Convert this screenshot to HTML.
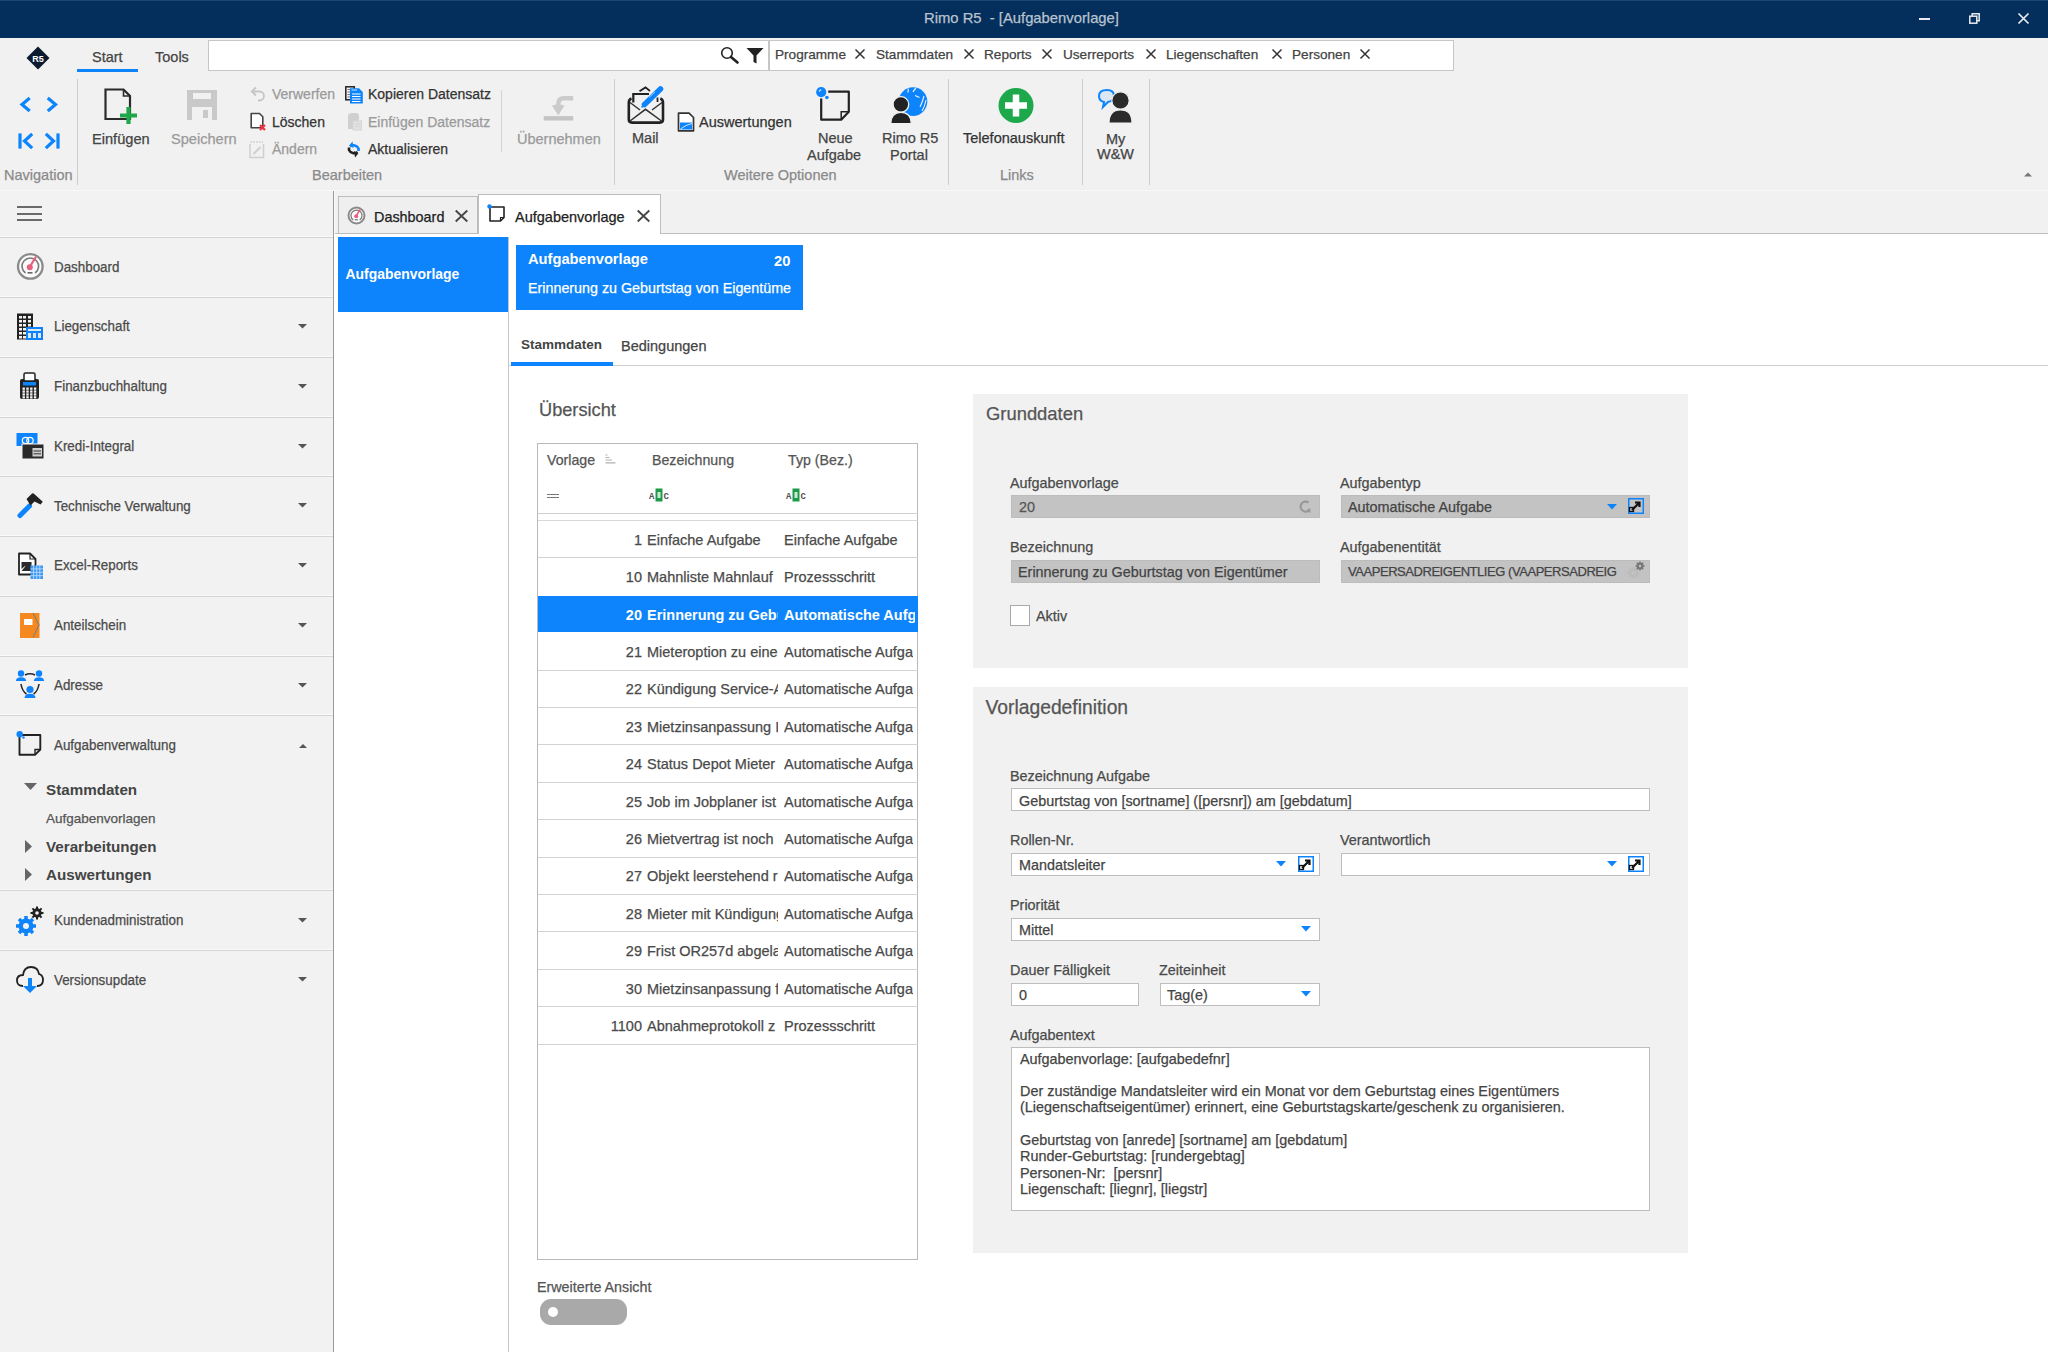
<!DOCTYPE html>
<html><head><meta charset="utf-8">
<style>
*{margin:0;padding:0;box-sizing:border-box}
html,body{width:2048px;height:1352px;overflow:hidden;background:#fff;font-family:"Liberation Sans",sans-serif;color:#444}
.a{position:absolute}
.t{position:absolute;white-space:nowrap;line-height:20px;height:20px;-webkit-text-stroke:0.25px currentColor}
.hl{position:absolute;height:1px;background:#d4d4d4}
.vl{position:absolute;width:1px;background:#c8c8c8}
svg{position:absolute;overflow:visible}
</style></head><body>
<!-- TITLE BAR -->
<div class="a" style="left:0;top:0;width:2048px;height:38px;background:#042e5b"></div><div class="a" style="left:0;top:0;width:2048px;height:1px;background:#1a4674"></div>
<div class="t" style="left:924px;top:8px;font-size:14.8px;color:#b9c3cf">Rimo R5&nbsp; - [Aufgabenvorlage]</div>
<div class="a" style="left:1919px;top:18px;width:11px;height:2px;background:#e8ecf2"></div>
<svg style="left:1969px;top:13px" width="11" height="11"><rect x="0.8" y="3.2" width="7" height="7" fill="none" stroke="#e8ecf2" stroke-width="1.5"/><path d="M3.2 3V0.8H10.2V7.8H8" fill="none" stroke="#e8ecf2" stroke-width="1.5"/></svg>
<svg style="left:2018px;top:13px" width="11" height="11"><path d="M0.5 0.5L10.5 10.5M10.5 0.5L0.5 10.5" stroke="#e8ecf2" stroke-width="1.7"/></svg>

<!-- RIBBON -->
<div class="a" style="left:0;top:38px;width:2048px;height:153px;background:#f1f1f1"></div>

<!-- logo -->
<svg style="left:26px;top:46px" width="24" height="24"><path d="M12 0.5L23.5 12L12 23.5L0.5 12Z" fill="#0b1a2e"/><text x="12" y="15.6" font-family="Liberation Sans" font-size="9" font-weight="bold" fill="#fff" text-anchor="middle">R5</text></svg>
<div class="t" style="left:92px;top:47px;font-size:14.5px;color:#444">Start</div>
<div class="a" style="left:77px;top:69px;width:61px;height:3px;background:#0d84fb"></div>
<div class="t" style="left:155px;top:47px;font-size:14.5px;color:#444">Tools</div>
<!-- search box -->
<div class="a" style="left:208px;top:40px;width:1246px;height:31px;background:#fff;border:1px solid #c6c6c6"></div>
<svg style="left:720px;top:46px" width="20" height="18"><circle cx="7" cy="7" r="5.3" fill="none" stroke="#222" stroke-width="1.6"/><path d="M11 11L17.5 16.5" stroke="#222" stroke-width="2.6" stroke-linecap="round"/></svg>
<svg style="left:746px;top:47px" width="18" height="17"><path d="M0.5 1H17.5L10.5 8.5V16.5L7.5 15V8.5Z" fill="#222"/></svg>
<div class="a" style="left:768px;top:41px;width:2px;height:29px;background:#c6c6c6"></div>
<div class="t" style="left:775px;top:45px;font-size:13.6px;color:#444">Programme</div>
<div class="t" style="left:876px;top:45px;font-size:13.6px;color:#444">Stammdaten</div>
<div class="t" style="left:984px;top:45px;font-size:13.6px;color:#444">Reports</div>
<div class="t" style="left:1063px;top:45px;font-size:13.6px;color:#444">Userreports</div>
<div class="t" style="left:1166px;top:45px;font-size:13.6px;color:#444">Liegenschaften</div>
<div class="t" style="left:1292px;top:45px;font-size:13.6px;color:#444">Personen</div>
<svg style="left:855px;top:49px" width="10" height="10"><path d="M0.5 0.5L9.5 9.5M9.5 0.5L0.5 9.5" stroke="#333" stroke-width="1.5"/></svg>
<svg style="left:964px;top:49px" width="10" height="10"><path d="M0.5 0.5L9.5 9.5M9.5 0.5L0.5 9.5" stroke="#333" stroke-width="1.5"/></svg>
<svg style="left:1042px;top:49px" width="10" height="10"><path d="M0.5 0.5L9.5 9.5M9.5 0.5L0.5 9.5" stroke="#333" stroke-width="1.5"/></svg>
<svg style="left:1146px;top:49px" width="10" height="10"><path d="M0.5 0.5L9.5 9.5M9.5 0.5L0.5 9.5" stroke="#333" stroke-width="1.5"/></svg>
<svg style="left:1272px;top:49px" width="10" height="10"><path d="M0.5 0.5L9.5 9.5M9.5 0.5L0.5 9.5" stroke="#333" stroke-width="1.5"/></svg>
<svg style="left:1360px;top:49px" width="10" height="10"><path d="M0.5 0.5L9.5 9.5M9.5 0.5L0.5 9.5" stroke="#333" stroke-width="1.5"/></svg>

<!-- ribbon body -->
<!-- navigation -->
<svg style="left:18px;top:96px" width="44" height="54" fill="none" stroke="#0d84fb" stroke-width="3.2" stroke-linecap="square">
<path d="M10.5 3L4 8.5L10.5 14"/><path d="M31 3L37.5 8.5L31 14"/>
<path d="M2 39V51" stroke-width="3.2"/><path d="M13 39L6.5 45L13 51"/>
<path d="M29 39L35.5 45L29 51"/><path d="M40 39V51" stroke-width="3.2"/>
</svg>
<div class="t" style="left:4px;top:164.5px;font-size:14.5px;color:#8a8a8a">Navigation</div>
<div class="vl" style="left:77px;top:79px;height:106px;background:#cdcdcd"></div>
<!-- Einfuegen -->
<svg style="left:104px;top:88px" width="34" height="38"><path d="M1.5 1.5H19.5L26 8V31H1.5Z" fill="none" stroke="#2b2b2b" stroke-width="2.2"/><path d="M19.5 1.5V8H26" fill="none" stroke="#2b2b2b" stroke-width="1.6"/><path d="M24.5 19V36M16 27.5H33" stroke="#1da84a" stroke-width="4.2"/></svg>
<div class="t" style="left:92px;top:129px;font-size:14.6px;color:#444">Einfügen</div>
<!-- Speichern -->
<svg style="left:187px;top:90px" width="31" height="31"><path d="M0 0H30V30H0Z" fill="#c9c9c9"/><rect x="6" y="3" width="18" height="6" fill="#f1f1f1"/><rect x="5" y="17" width="20" height="13" fill="#f1f1f1"/><rect x="16" y="20" width="5" height="8" fill="#c9c9c9"/></svg>
<div class="t" style="left:171px;top:129px;font-size:14.6px;color:#9a9a9a">Speichern</div>
<!-- small buttons col 1 -->
<svg style="left:250px;top:86px" width="18" height="16"><path d="M6 1.5L1.8 5.5L6 9.5" fill="none" stroke="#c5c5c5" stroke-width="1.8"/><path d="M2.5 5.5H9.5A4.5 4.5 0 0 1 9.5 14.5H8" fill="none" stroke="#c5c5c5" stroke-width="1.8"/></svg>
<div class="t" style="left:272px;top:84px;font-size:14px;color:#9a9a9a">Verwerfen</div>
<svg style="left:250px;top:112px" width="18" height="20"><path d="M1.2 1.5H9.5L12.8 4.8V15.7H1.2Z" fill="#fff" stroke="#444" stroke-width="1.6" stroke-linejoin="round"/><path d="M10 13L15 18M15 13L10 18" stroke="#ee3344" stroke-width="2.2"/></svg>
<div class="t" style="left:272px;top:112px;font-size:14px;color:#333">Löschen</div>
<svg style="left:249px;top:140px" width="18" height="19"><path d="M1 4V17.5H14.5V4" fill="none" stroke="#cfcfcf" stroke-width="1.5"/><path d="M1.5 2H14" stroke="#cfcfcf" stroke-width="1.6" stroke-dasharray="1.6 1.2"/><path d="M4.5 14L11.5 7" stroke="#cfcfcf" stroke-width="2.2"/></svg>
<div class="t" style="left:272px;top:139px;font-size:14px;color:#9a9a9a">Ändern</div>
<!-- col 2 -->
<svg style="left:345px;top:86px" width="19" height="18"><rect x="0.8" y="0.8" width="8.5" height="13" fill="none" stroke="#222" stroke-width="1.5"/><path d="M2.5 3.5H7M2.5 6H7M2.5 8.5H7M2.5 11H7" stroke="#555" stroke-width="0.8"/><path d="M5 2.2H14L17.8 6V17.4H5Z" fill="#0d84fb"/><path d="M7 8H15.5M7 10.5H15.5M7 13H15.5M7 15.5H15.5" stroke="#fff" stroke-width="1"/><path d="M6.5 4H12" stroke="#fff" stroke-width="0.8"/></svg>
<div class="t" style="left:368px;top:84px;font-size:14px;color:#333">Kopieren Datensatz</div>
<svg style="left:347px;top:112px" width="17" height="19"><path d="M1 4Q1 1 5 1H9Q12 1 12 4V17H1Z" fill="#d0d0d0"/><rect x="6" y="9" width="8.5" height="9" fill="#e2e2e2" stroke="#d5d5d5" stroke-width="1"/><path d="M8 12H13M8 14.5H13" stroke="#cfcfcf" stroke-width="0.8"/></svg>
<div class="t" style="left:368px;top:112px;font-size:14px;color:#9a9a9a">Einfügen Datensatz</div>
<svg style="left:346px;top:140px" width="16" height="19"><path d="M4 6.5A5.6 5.6 0 0 1 12.5 8.5V11" fill="none" stroke="#0d84fb" stroke-width="2.6"/><path d="M6.5 1.5L3.2 5.5L7.5 8Z" fill="#0d84fb"/><path d="M11.5 12A5.6 5.6 0 0 1 3 10V7.5" fill="none" stroke="#222" stroke-width="2.6"/><path d="M9 17.5L12.3 13.5L8 11Z" fill="#222"/></svg>
<div class="t" style="left:368px;top:139px;font-size:14px;color:#333">Aktualisieren</div>
<div class="vl" style="left:501px;top:90px;height:62px;background:#d3d3d3"></div>
<!-- Uebernehmen -->
<svg style="left:542px;top:95px" width="33" height="27"><rect x="1.7" y="21.1" width="29.5" height="4.4" fill="#c4c4c4"/><path d="M16.3 13V9Q16.3 3.3 22 3.3H31.2" fill="none" stroke="#cbcbcb" stroke-width="4.4"/><path d="M10 10.5Q16.3 8.5 22.5 10.5L16.3 20.5Z" fill="#cbcbcb"/></svg>
<div class="t" style="left:517px;top:129px;font-size:14.5px;color:#9a9a9a">Übernehmen</div>
<div class="t" style="left:312px;top:164.5px;font-size:14.5px;color:#8a8a8a">Bearbeiten</div>
<div class="vl" style="left:614px;top:79px;height:106px;background:#cdcdcd"></div>
<!-- Mail -->
<svg style="left:627px;top:86px" width="38" height="38"><path d="M12.5 5.3L18.5 1.4L23 5" fill="none" stroke="#222" stroke-width="1.8"/><path d="M6.3 16.5V8H22" fill="none" stroke="#222" stroke-width="2.2"/><path d="M30.5 11.5V16" stroke="#222" stroke-width="1.8"/><path d="M4.5 12.5Q1.8 13.5 1.8 16.5V33.5Q1.8 36.6 5 36.6H32.8Q36 36.6 36 33.5V16.5Q36 13.5 33.3 12.5" fill="none" stroke="#222" stroke-width="2.6"/><path d="M3 16.5L13 24M35 16.5L25 24M3 35L18.5 23.3L34.5 35" fill="none" stroke="#333" stroke-width="1.5"/><path d="M33.5 3L17.5 18.5" stroke="#0d84fb" stroke-width="5.5" stroke-linecap="round"/><path d="M22 11.5L28 6" stroke="#bfe0ff" stroke-width="0.8"/><path d="M16 20L14.5 21.5" stroke="#0d84fb" stroke-width="1.6"/></svg>
<div class="t" style="left:632px;top:128px;font-size:14.5px;color:#444">Mail</div>
<svg style="left:677px;top:112px" width="18" height="20"><path d="M1.5 1.2H12L16.5 5.5V18.8H1.5Z" fill="#fff" stroke="#333" stroke-width="1.7" stroke-linejoin="round"/><path d="M3 10.5H15V17.5H3Z" fill="#0d84fb"/><path d="M3.5 17L9 13.5L15 11.5" fill="none" stroke="#e6f2ff" stroke-width="0.9"/></svg>
<div class="t" style="left:699px;top:112px;font-size:14.5px;color:#333">Auswertungen</div>
<svg style="left:815px;top:86px" width="37" height="36"><path d="M13.2 5.7H33.8V25.7L26.2 33.7H6.2V12.4" fill="none" stroke="#222" stroke-width="2.2" stroke-linejoin="round"/><path d="M26.2 33.7V25.7H33.8" fill="none" stroke="#222" stroke-width="1.5"/><circle cx="6.2" cy="6.1" r="5.1" fill="#0d84fb"/><path d="M4 5.5L6 3.5" stroke="#cfe6ff" stroke-width="1.3"/><circle cx="11.9" cy="11.5" r="1.8" fill="#0d84fb"/></svg>
<div class="t" style="left:818px;top:128px;font-size:14.5px;color:#444">Neue</div>
<div class="t" style="left:807px;top:145px;font-size:14.5px;color:#444">Aufgabe</div>
<svg style="left:889px;top:86px" width="40" height="38"><circle cx="24" cy="15.6" r="14.3" fill="#0d84fb"/><path d="M19 2.5Q20 5 18.5 6.5M27 2Q25 4 24 6M26 9.5L30.5 11.5M35 10Q33.5 16 31 21M37 14Q36 20 33 25" fill="none" stroke="#e9f3ff" stroke-width="1.1"/><circle cx="11.9" cy="18.4" r="7.8" fill="#222" stroke="#f1f1f1" stroke-width="1.3"/><path d="M1.8 37.5Q2 26.3 12 26.3Q22 26.3 22.2 37.5Z" fill="#222" stroke="#f1f1f1" stroke-width="1.2"/></svg>
<div class="t" style="left:882px;top:128px;font-size:14.5px;color:#444">Rimo R5</div>
<div class="t" style="left:890px;top:145px;font-size:14.5px;color:#444">Portal</div>
<div class="t" style="left:724px;top:164.5px;font-size:14.5px;color:#8a8a8a">Weitere Optionen</div>
<div class="vl" style="left:948px;top:79px;height:106px;background:#cdcdcd"></div>
<svg style="left:998px;top:88px" width="36" height="36"><circle cx="18" cy="17.5" r="17.5" fill="#1ca84b"/><path d="M18 6.5V28.5M7 17.5H29" stroke="#fff" stroke-width="6.5"/></svg>
<div class="t" style="left:963px;top:128px;font-size:14.5px;color:#333">Telefonauskunft</div>
<div class="t" style="left:1000px;top:164.5px;font-size:14.5px;color:#8a8a8a">Links</div>
<div class="vl" style="left:1082px;top:79px;height:106px;background:#cdcdcd"></div>
<svg style="left:1097px;top:88px" width="38" height="36"><path d="M10 2Q2 2 2 8Q2 13 7 14L6 19L11 14Q17 13 17 8Q17 2 10 2Z" fill="#dbe7f3" stroke="#0d84fb" stroke-width="2"/><circle cx="23.5" cy="12.5" r="8.7" fill="#2b2b2b" stroke="#f1f1f1" stroke-width="1.2"/><path d="M12 35Q12 22 23.5 22Q35 22 35 35Z" fill="#2b2b2b" stroke="#f1f1f1" stroke-width="1.2"/></svg>
<div class="t" style="left:1106px;top:129px;font-size:14.5px;color:#444">My</div>
<div class="t" style="left:1097px;top:144px;font-size:14.5px;color:#444">W&amp;W</div>
<div class="vl" style="left:1149px;top:79px;height:106px;background:#cdcdcd"></div>
<svg style="left:2024px;top:172px" width="8" height="5"><path d="M0 4.5L4 0.5L8 4.5Z" fill="#777"/></svg>
<div class="hl" style="left:0;top:190px;width:2048px;height:1px;background:#f8f8f8"></div>

<!-- SIDEBAR -->
<div class="a" style="left:0;top:191px;width:333px;height:1161px;background:#f2f2f2"></div>
<div class="a" style="left:333px;top:191px;width:1px;height:1161px;background:#9a9a9a"></div><div class="a" style="left:334px;top:191px;width:4px;height:43px;background:#fbfbfb"></div>
<div class="a" style="left:17px;top:206px;width:25px;height:2px;background:#6a6a6a"></div>
<div class="a" style="left:17px;top:212.5px;width:25px;height:2px;background:#6a6a6a"></div>
<div class="a" style="left:17px;top:219px;width:25px;height:2px;background:#6a6a6a"></div>
<div class="hl" style="left:0;top:236px;width:333px;height:1px;background:#fafafa"></div><div class="hl" style="left:0;top:237px;width:333px;height:1px;background:#d5d5d5"></div>
<div class="hl" style="left:0;top:296px;width:333px;height:1px;background:#fafafa"></div><div class="hl" style="left:0;top:297px;width:333px;height:1px;background:#d5d5d5"></div>
<div class="hl" style="left:0;top:356px;width:333px;height:1px;background:#fafafa"></div><div class="hl" style="left:0;top:357px;width:333px;height:1px;background:#d5d5d5"></div>
<div class="hl" style="left:0;top:416px;width:333px;height:1px;background:#fafafa"></div><div class="hl" style="left:0;top:417px;width:333px;height:1px;background:#d5d5d5"></div>
<div class="hl" style="left:0;top:475px;width:333px;height:1px;background:#fafafa"></div><div class="hl" style="left:0;top:476px;width:333px;height:1px;background:#d5d5d5"></div>
<div class="hl" style="left:0;top:535px;width:333px;height:1px;background:#fafafa"></div><div class="hl" style="left:0;top:536px;width:333px;height:1px;background:#d5d5d5"></div>
<div class="hl" style="left:0;top:595px;width:333px;height:1px;background:#fafafa"></div><div class="hl" style="left:0;top:596px;width:333px;height:1px;background:#d5d5d5"></div>
<div class="hl" style="left:0;top:655px;width:333px;height:1px;background:#fafafa"></div><div class="hl" style="left:0;top:656px;width:333px;height:1px;background:#d5d5d5"></div>
<div class="hl" style="left:0;top:714px;width:333px;height:1px;background:#fafafa"></div><div class="hl" style="left:0;top:715px;width:333px;height:1px;background:#d5d5d5"></div>
<div class="hl" style="left:0;top:889px;width:333px;height:1px;background:#fafafa"></div><div class="hl" style="left:0;top:890px;width:333px;height:1px;background:#d5d5d5"></div>
<div class="hl" style="left:0;top:949px;width:333px;height:1px;background:#fafafa"></div><div class="hl" style="left:0;top:950px;width:333px;height:1px;background:#d5d5d5"></div>

<div class="t" style="left:54px;top:256.5px;font-size:14px;color:#4a4a4a;transform:scaleX(0.955);transform-origin:0 50%">Dashboard</div>
<div class="t" style="left:54px;top:316.2px;font-size:14px;color:#4a4a4a;transform:scaleX(0.955);transform-origin:0 50%">Liegenschaft</div>
<svg style="left:298px;top:323.5px" width="9" height="5"><path d="M0 0H9L4.5 4.5Z" fill="#555"/></svg>
<div class="t" style="left:54px;top:376.0px;font-size:14px;color:#4a4a4a;transform:scaleX(0.955);transform-origin:0 50%">Finanzbuchhaltung</div>
<svg style="left:298px;top:383.5px" width="9" height="5"><path d="M0 0H9L4.5 4.5Z" fill="#555"/></svg>
<div class="t" style="left:54px;top:435.8px;font-size:14px;color:#4a4a4a;transform:scaleX(0.955);transform-origin:0 50%">Kredi-Integral</div>
<svg style="left:298px;top:443.5px" width="9" height="5"><path d="M0 0H9L4.5 4.5Z" fill="#555"/></svg>
<div class="t" style="left:54px;top:495.5px;font-size:14px;color:#4a4a4a;transform:scaleX(0.955);transform-origin:0 50%">Technische Verwaltung</div>
<svg style="left:298px;top:503.0px" width="9" height="5"><path d="M0 0H9L4.5 4.5Z" fill="#555"/></svg>
<div class="t" style="left:54px;top:555.2px;font-size:14px;color:#4a4a4a;transform:scaleX(0.955);transform-origin:0 50%">Excel-Reports</div>
<svg style="left:298px;top:563.0px" width="9" height="5"><path d="M0 0H9L4.5 4.5Z" fill="#555"/></svg>
<div class="t" style="left:54px;top:615.0px;font-size:14px;color:#4a4a4a;transform:scaleX(0.955);transform-origin:0 50%">Anteilschein</div>
<svg style="left:298px;top:622.5px" width="9" height="5"><path d="M0 0H9L4.5 4.5Z" fill="#555"/></svg>
<div class="t" style="left:54px;top:674.8px;font-size:14px;color:#4a4a4a;transform:scaleX(0.955);transform-origin:0 50%">Adresse</div>
<svg style="left:298px;top:682.5px" width="9" height="5"><path d="M0 0H9L4.5 4.5Z" fill="#555"/></svg>
<div class="t" style="left:54px;top:734.5px;font-size:14px;color:#4a4a4a;transform:scaleX(0.955);transform-origin:0 50%">Aufgabenverwaltung</div>
<svg style="left:299px;top:743.5px" width="8" height="4"><path d="M0 4H8L4 0Z" fill="#555"/></svg>
<div class="t" style="left:54px;top:910.0px;font-size:14px;color:#4a4a4a;transform:scaleX(0.955);transform-origin:0 50%">Kundenadministration</div>
<svg style="left:298px;top:917.5px" width="9" height="5"><path d="M0 0H9L4.5 4.5Z" fill="#555"/></svg>
<div class="t" style="left:54px;top:969.7px;font-size:14px;color:#4a4a4a;transform:scaleX(0.955);transform-origin:0 50%">Versionsupdate</div>
<svg style="left:298px;top:977.0px" width="9" height="5"><path d="M0 0H9L4.5 4.5Z" fill="#555"/></svg>

<!-- dashboard icon -->
<svg style="left:16px;top:252px" width="29" height="29"><circle cx="14.3" cy="14.4" r="12.3" fill="#fafafa" stroke="#8a8a8a" stroke-width="2.3"/><path d="M9.5 21A8.3 8.3 0 1 1 19.1 21" fill="none" stroke="#7a7a7a" stroke-width="1.6"/><path d="M14 14.5L19.5 5.5" stroke="#e8607f" stroke-width="2.2" stroke-linecap="round"/><circle cx="13.8" cy="15.2" r="3" fill="#e8607f"/><path d="M11.5 20.8H16.5" stroke="#666" stroke-width="1.6"/></svg>
<!-- liegenschaft icon -->
<svg style="left:16px;top:313px" width="28" height="28"><rect x="1" y="0.5" width="16" height="26" fill="#222"/><rect x="3" y="3" width="3" height="2.5" fill="#f2f2f2"/><rect x="7" y="3" width="3" height="2.5" fill="#f2f2f2"/><rect x="12" y="3" width="3" height="2.5" fill="#f2f2f2"/><rect x="3" y="7" width="3" height="2.5" fill="#f2f2f2"/><rect x="7" y="7" width="3" height="2.5" fill="#f2f2f2"/><rect x="12" y="7" width="3" height="2.5" fill="#f2f2f2"/><rect x="3" y="11" width="3" height="2.5" fill="#f2f2f2"/><rect x="7" y="11" width="3" height="2.5" fill="#f2f2f2"/><rect x="12" y="11" width="3" height="2.5" fill="#f2f2f2"/><rect x="3" y="15" width="3" height="2.5" fill="#f2f2f2"/><rect x="7" y="15" width="3" height="2.5" fill="#f2f2f2"/><rect x="12" y="15" width="3" height="2.5" fill="#f2f2f2"/><rect x="3" y="19" width="3" height="2.5" fill="#f2f2f2"/><rect x="7" y="19" width="3" height="2.5" fill="#f2f2f2"/><rect x="12" y="19" width="3" height="2.5" fill="#f2f2f2"/><rect x="3" y="23" width="3" height="2.5" fill="#f2f2f2"/><rect x="7" y="23" width="3" height="2.5" fill="#f2f2f2"/><rect x="12" y="23" width="3" height="2.5" fill="#f2f2f2"/><path d="M10 14H27V27H10Z" fill="#0d84fb"/><path d="M12 16H25V18H12ZM12 20H15V25H12ZM17 20H20V25H17ZM22 20H25V25H22Z" fill="#f2f2f2" opacity="0.9"/></svg>
<!-- finanzbuchhaltung icon -->
<svg style="left:19px;top:372px" width="22" height="28"><rect x="1" y="7" width="19" height="20" rx="2" fill="#222"/><rect x="5" y="1" width="11" height="8" rx="1.5" fill="#fff" stroke="#222" stroke-width="1.5"/><rect x="4" y="10" width="13" height="3.5" fill="#0d84fb"/><rect x="3.5" y="15.5" width="2.4" height="2.3" fill="#f2f2f2"/><rect x="7.3" y="15.5" width="2.4" height="2.3" fill="#f2f2f2"/><rect x="11.1" y="15.5" width="2.4" height="2.3" fill="#f2f2f2"/><rect x="14.9" y="15.5" width="2.4" height="2.3" fill="#f2f2f2"/><rect x="3.5" y="18.4" width="2.4" height="2.3" fill="#f2f2f2"/><rect x="7.3" y="18.4" width="2.4" height="2.3" fill="#f2f2f2"/><rect x="11.1" y="18.4" width="2.4" height="2.3" fill="#f2f2f2"/><rect x="14.9" y="18.4" width="2.4" height="2.3" fill="#f2f2f2"/><rect x="3.5" y="21.3" width="2.4" height="2.3" fill="#f2f2f2"/><rect x="7.3" y="21.3" width="2.4" height="2.3" fill="#f2f2f2"/><rect x="11.1" y="21.3" width="2.4" height="2.3" fill="#f2f2f2"/><rect x="14.9" y="21.3" width="2.4" height="2.3" fill="#f2f2f2"/><rect x="3.5" y="24.2" width="2.4" height="2.3" fill="#f2f2f2"/><rect x="7.3" y="24.2" width="2.4" height="2.3" fill="#f2f2f2"/><rect x="11.1" y="24.2" width="2.4" height="2.3" fill="#f2f2f2"/><rect x="14.9" y="24.2" width="2.4" height="2.3" fill="#f2f2f2"/></svg>
<!-- kredi icon -->
<svg style="left:16px;top:432px" width="29" height="28"><rect x="0.5" y="1" width="21" height="13" fill="#0d84fb"/><circle cx="9.5" cy="8.5" r="3.2" fill="none" stroke="#fff" stroke-width="1.2"/><circle cx="14" cy="8.5" r="3.2" fill="none" stroke="#fff" stroke-width="1.2"/><rect x="6" y="12" width="22" height="15" fill="#2a2a2a" stroke="#f2f2f2" stroke-width="1"/><rect x="16.5" y="16" width="9.5" height="8.5" fill="#cfcfcf"/><path d="M17.5 19H25M17.5 21.8H25" stroke="#333" stroke-width="1"/></svg>
<!-- hammer -->
<svg style="left:17px;top:492px" width="27" height="27"><path d="M3 23.5L12.5 14" stroke="#0d84fb" stroke-width="5" stroke-linecap="round"/><path d="M9.5 7L15 1.5Q16 1 17 1.7L25.8 9.8L23.5 12.5L17.5 9.5L13.5 13.5Z" fill="#222"/></svg>
<!-- excel reports -->
<svg style="left:17px;top:551px" width="28" height="30"><path d="M2 2.5H13L18.5 8V23.5H2Z" fill="#fff" stroke="#222" stroke-width="1.8" stroke-linejoin="round"/><path d="M13 2.5V8H18.5" fill="none" stroke="#222" stroke-width="1.2"/><path d="M4.5 20L9 14.5L11 16.5L14.5 12.5V20Z M4.5 11H14.5V14L10 17L8 15L4.5 18Z" fill="#2a2a2a"/><rect x="13.5" y="14.5" width="12.5" height="13.5" fill="#3d97f5"/><path d="M16.6 14.5V28M19.7 14.5V28M22.8 14.5V28M13.5 17.9H26M13.5 21.3H26M13.5 24.7H26" stroke="#b8dafc" stroke-width="0.9"/></svg>
<!-- anteilschein -->
<svg style="left:18px;top:611px" width="24" height="29"><path d="M2 2H15L21.5 14L15 27H2Z" fill="#f5891f"/><path d="M15 2H21.5V27H15L21.5 14Z" fill="#f5891f"/><path d="M15 2L21 14L15 26.5" fill="none" stroke="#8a7a6a" stroke-width="1.1"/><rect x="6" y="8" width="8.5" height="6" fill="#fff"/></svg>
<!-- adresse -->
<svg style="left:15px;top:669px" width="30" height="30"><path d="M10 6Q15 3.5 20 6M6 15Q7 22 11.5 25M24 15Q23 22 18.5 25" fill="none" stroke="#2a2a2a" stroke-width="1.6"/><circle cx="6" cy="4.5" r="3.2" fill="#0d84fb"/><path d="M0.8 12Q1 8.2 6 8.2Q11 8.2 11.2 12Z" fill="#0d84fb"/><circle cx="24" cy="4.5" r="3.2" fill="#0d84fb"/><path d="M18.8 12Q19 8.2 24 8.2Q29 8.2 29.2 12Z" fill="#0d84fb"/><circle cx="15" cy="20.5" r="3.6" fill="#0d84fb"/><path d="M9.5 29Q9.7 24.7 15 24.7Q20.3 24.7 20.5 29Z" fill="#0d84fb"/></svg>
<!-- aufgabenverwaltung -->
<svg style="left:16px;top:730px" width="28" height="30"><path d="M3.5 5H24.3V19.5L19 24.8H3.5Z" fill="none" stroke="#222" stroke-width="1.9" stroke-linejoin="round"/><path d="M19 24.8V19.5H24.3" fill="none" stroke="#222" stroke-width="1.4"/><circle cx="3.7" cy="4.2" r="3.2" fill="#0d84fb"/><circle cx="7.5" cy="7.5" r="1.2" fill="#0d84fb"/></svg>
<svg style="left:24px;top:783px" width="13" height="8"><path d="M0 0H13L6.5 7Z" fill="#666"/></svg>
<div class="t" style="left:46px;top:780px;font-size:15.2px;font-weight:bold;-webkit-text-stroke:0;color:#444">Stammdaten</div>
<div class="t" style="left:46px;top:809px;font-size:13.5px;color:#555">Aufgabenvorlagen</div>
<svg style="left:25px;top:840px" width="8" height="13"><path d="M0 0L7 6.5L0 13Z" fill="#666"/></svg>
<div class="t" style="left:46px;top:837px;font-size:15.2px;font-weight:bold;-webkit-text-stroke:0;color:#444">Verarbeitungen</div>
<svg style="left:25px;top:868px" width="8" height="13"><path d="M0 0L7 6.5L0 13Z" fill="#666"/></svg>
<div class="t" style="left:46px;top:865px;font-size:15.2px;font-weight:bold;-webkit-text-stroke:0;color:#444">Auswertungen</div>
<!-- kundenadmin -->
<svg style="left:15px;top:905px" width="30" height="30"><g transform="translate(11,21)"><circle r="5.5" fill="none" stroke="#0d84fb" stroke-width="4"/><g stroke="#0d84fb" stroke-width="3.5"><path d="M0 -10V10M-10 0H10M-7 -7L7 7M7 -7L-7 7"/></g><circle r="3" fill="#f2f2f2"/></g><g transform="translate(22,8)"><circle r="3.5" fill="none" stroke="#222" stroke-width="2.5"/><g stroke="#222" stroke-width="2"><path d="M0 -6.5V6.5M-6.5 0H6.5M-4.6 -4.6L4.6 4.6M4.6 -4.6L-4.6 4.6"/></g><circle r="1.8" fill="#f2f2f2"/></g></svg>
<!-- versionsupdate -->
<svg style="left:16px;top:965px" width="28" height="30"><path d="M7 21Q1 21 1 15.5Q1 10 7 10Q8 2 15 2Q22 2 23 9Q27 10 27 15Q27 21 21 21" fill="none" stroke="#222" stroke-width="1.8"/><path d="M14 13V25" stroke="#0d84fb" stroke-width="4"/><path d="M7 21L14 28L21 21Z" fill="#0d84fb"/></svg>

<!-- DOCUMENT TABS -->
<div class="a" style="left:335px;top:191px;width:1713px;height:43px;background:#f1f1f1"></div>
<div class="a" style="left:335px;top:233px;width:1713px;height:1px;background:#bfbfbf"></div>
<div class="a" style="left:338px;top:196px;width:140px;height:38px;background:#efefef;border:1px solid #bdbdbd"></div>
<svg style="left:347px;top:206px" width="19" height="19"><circle cx="9.5" cy="9.5" r="8" fill="#fafafa" stroke="#8a8a8a" stroke-width="2"/><path d="M6.3 14A5.5 5.5 0 1 1 12.7 14" fill="none" stroke="#7a7a7a" stroke-width="1.2"/><path d="M9.3 9.7L12.8 4" stroke="#e8607f" stroke-width="1.6" stroke-linecap="round"/><circle cx="9.2" cy="10.2" r="2" fill="#e8607f"/><path d="M7.7 13.8H10.9" stroke="#666" stroke-width="1.1"/></svg>
<div class="t" style="left:374px;top:206.8px;font-size:14.4px;color:#222">Dashboard</div>
<svg style="left:455px;top:210px" width="13" height="12"><path d="M0.7 0.5L12.3 11.5M12.3 0.5L0.7 11.5" stroke="#444" stroke-width="1.8"/></svg>
<div class="a" style="left:478px;top:194px;width:183px;height:40px;background:#fff;border:1px solid #bdbdbd;border-bottom:none"></div>
<svg style="left:487px;top:204px" width="19" height="19"><path d="M3 3H17V13.5L13.5 17H3Z" fill="none" stroke="#222" stroke-width="1.6" stroke-linejoin="round"/><path d="M13.5 17V13.5H17" fill="none" stroke="#222" stroke-width="1.2"/><circle cx="2.5" cy="2.5" r="2.2" fill="#0d84fb"/></svg>
<div class="t" style="left:515px;top:206.5px;font-size:14.5px;color:#222">Aufgabenvorlage</div>
<svg style="left:637px;top:210px" width="13" height="12"><path d="M0.7 0.5L12.3 11.5M12.3 0.5L0.7 11.5" stroke="#444" stroke-width="1.8"/></svg>

<!-- left nav in doc -->
<div class="a" style="left:338px;top:237px;width:170px;height:75px;background:#0d84fb"></div>
<div class="t" style="left:345.5px;top:264px;font-size:13.95px;font-weight:bold;-webkit-text-stroke:0;color:#fff">Aufgabenvorlage</div>
<div class="a" style="left:508px;top:237px;width:1px;height:1115px;background:#c6c6c6"></div>

<!-- header card -->
<div class="a" style="left:516px;top:245px;width:287px;height:65px;background:#0d84fb"></div>
<div class="t" style="left:528px;top:249px;font-size:14.7px;font-weight:bold;-webkit-text-stroke:0;color:#fff">Aufgabenvorlage</div>
<div class="t" style="left:774px;top:251px;font-size:14.7px;font-weight:bold;-webkit-text-stroke:0;color:#fff">20</div>
<div class="a" style="left:528px;top:278px;width:263px;height:20px;overflow:hidden"><div class="t" style="left:0;top:0;font-size:14.3px;color:#fff">Erinnerung zu Geburtstag von Eigentümer</div></div>

<!-- sub tabs -->
<div class="t" style="left:521px;top:335px;font-size:13.5px;font-weight:bold;-webkit-text-stroke:0;color:#444">Stammdaten</div>
<div class="t" style="left:621px;top:335.5px;font-size:14.5px;color:#444">Bedingungen</div>
<div class="a" style="left:509px;top:365px;width:1539px;height:1px;background:#cfcfcf"></div>
<div class="a" style="left:511px;top:362px;width:102px;height:4px;background:#0d84fb"></div>

<div class="t" style="left:539px;top:400px;font-size:18.2px;color:#555">Übersicht</div>

<!-- GRID -->
<div class="a" style="left:537px;top:443px;width:381px;height:817px;border:1px solid #b9b9b9;background:#fff"></div>
<div class="t" style="left:547px;top:450px;font-size:14.2px;color:#555">Vorlage</div>
<svg style="left:605px;top:454px" width="11" height="10"><path d="M0.5 1H2.5M0.5 3.5H4.5M0.5 6H7M0.5 8.8H10.5" fill="none" stroke="#b0b0b0" stroke-width="1.2"/></svg>
<div class="t" style="left:652px;top:450px;font-size:14.2px;color:#555">Bezeichnung</div>
<div class="t" style="left:788px;top:450px;font-size:14.2px;color:#555">Typ (Bez.)</div>
<div class="a" style="left:547px;top:493.5px;width:12px;height:1.5px;background:#777"></div>
<div class="a" style="left:547px;top:496.5px;width:12px;height:1.5px;background:#777"></div>
<svg style="left:648.5px;top:488px" width="21" height="14"><text x="0" y="11" font-family="Liberation Mono" font-size="9" font-weight="bold" fill="#555">A</text><rect x="6.5" y="0.5" width="7" height="13" fill="#1f9a4a"/><rect x="8.5" y="4" width="3" height="6" fill="#cfe9d7"/><text x="14.5" y="11" font-family="Liberation Mono" font-size="9" font-weight="bold" fill="#555">C</text></svg>
<svg style="left:786.0px;top:488px" width="21" height="14"><text x="0" y="11" font-family="Liberation Mono" font-size="9" font-weight="bold" fill="#555">A</text><rect x="6.5" y="0.5" width="7" height="13" fill="#1f9a4a"/><rect x="8.5" y="4" width="3" height="6" fill="#cfe9d7"/><text x="14.5" y="11" font-family="Liberation Mono" font-size="9" font-weight="bold" fill="#555">C</text></svg>

<div class="a" style="left:538px;top:513px;width:380px;height:1px;background:#cfcfcf"></div>
<div class="a" style="left:538px;top:520px;width:380px;height:1px;background:#d8d8d8"></div>
<div class="t" style="left:545px;top:529.7px;width:97px;text-align:right;font-size:14.5px;font-weight:normal;color:#4a4a4a">1</div>
<div class="a" style="left:647px;top:529.7px;width:131px;height:20px;overflow:hidden"><div class="t" style="left:0;top:0;font-size:14.5px;font-weight:normal;color:#4a4a4a">Einfache Aufgabe</div></div>
<div class="a" style="left:784px;top:529.7px;width:131px;height:20px;overflow:hidden"><div class="t" style="left:0;top:0;font-size:14.5px;font-weight:normal;color:#4a4a4a">Einfache Aufgabe</div></div>
<div class="a" style="left:538px;top:557.4px;width:380px;height:1px;background:#d3d3d3"></div>
<div class="t" style="left:545px;top:567.1px;width:97px;text-align:right;font-size:14.5px;font-weight:normal;color:#4a4a4a">10</div>
<div class="a" style="left:647px;top:567.1px;width:131px;height:20px;overflow:hidden"><div class="t" style="left:0;top:0;font-size:14.5px;font-weight:normal;color:#4a4a4a">Mahnliste Mahnlauf</div></div>
<div class="a" style="left:784px;top:567.1px;width:131px;height:20px;overflow:hidden"><div class="t" style="left:0;top:0;font-size:14.5px;font-weight:normal;color:#4a4a4a">Prozessschritt</div></div>
<div class="a" style="left:538px;top:595.6px;width:380px;height:36px;background:#0d84fb"></div>
<div class="t" style="left:545px;top:604.5px;width:97px;text-align:right;font-size:14.5px;font-weight:bold;-webkit-text-stroke:0;color:#fff">20</div>
<div class="a" style="left:647px;top:604.5px;width:131px;height:20px;overflow:hidden"><div class="t" style="left:0;top:0;font-size:14.5px;font-weight:bold;-webkit-text-stroke:0;color:#fff">Erinnerung zu Geburtstag</div></div>
<div class="a" style="left:784px;top:604.5px;width:131px;height:20px;overflow:hidden"><div class="t" style="left:0;top:0;font-size:14.5px;font-weight:bold;-webkit-text-stroke:0;color:#fff">Automatische Aufgabe</div></div>
<div class="t" style="left:545px;top:641.9px;width:97px;text-align:right;font-size:14.5px;font-weight:normal;color:#4a4a4a">21</div>
<div class="a" style="left:647px;top:641.9px;width:131px;height:20px;overflow:hidden"><div class="t" style="left:0;top:0;font-size:14.5px;font-weight:normal;color:#4a4a4a">Mieteroption zu einem</div></div>
<div class="a" style="left:784px;top:641.9px;width:129px;height:20px;overflow:hidden"><div class="t" style="left:0;top:0;font-size:14.5px;font-weight:normal;color:#4a4a4a">Automatische Aufgabe</div></div>
<div class="a" style="left:538px;top:669.6px;width:380px;height:1px;background:#d3d3d3"></div>
<div class="t" style="left:545px;top:679.3px;width:97px;text-align:right;font-size:14.5px;font-weight:normal;color:#4a4a4a">22</div>
<div class="a" style="left:647px;top:679.3px;width:131px;height:20px;overflow:hidden"><div class="t" style="left:0;top:0;font-size:14.5px;font-weight:normal;color:#4a4a4a">Kündigung Service-Abo</div></div>
<div class="a" style="left:784px;top:679.3px;width:129px;height:20px;overflow:hidden"><div class="t" style="left:0;top:0;font-size:14.5px;font-weight:normal;color:#4a4a4a">Automatische Aufgabe</div></div>
<div class="a" style="left:538px;top:707.0px;width:380px;height:1px;background:#d3d3d3"></div>
<div class="t" style="left:545px;top:716.7px;width:97px;text-align:right;font-size:14.5px;font-weight:normal;color:#4a4a4a">23</div>
<div class="a" style="left:647px;top:716.7px;width:131px;height:20px;overflow:hidden"><div class="t" style="left:0;top:0;font-size:14.5px;font-weight:normal;color:#4a4a4a">Mietzinsanpassung I</div></div>
<div class="a" style="left:784px;top:716.7px;width:129px;height:20px;overflow:hidden"><div class="t" style="left:0;top:0;font-size:14.5px;font-weight:normal;color:#4a4a4a">Automatische Aufgabe</div></div>
<div class="a" style="left:538px;top:744.4px;width:380px;height:1px;background:#d3d3d3"></div>
<div class="t" style="left:545px;top:754.1px;width:97px;text-align:right;font-size:14.5px;font-weight:normal;color:#4a4a4a">24</div>
<div class="a" style="left:647px;top:754.1px;width:131px;height:20px;overflow:hidden"><div class="t" style="left:0;top:0;font-size:14.5px;font-weight:normal;color:#4a4a4a">Status Depot Mieter</div></div>
<div class="a" style="left:784px;top:754.1px;width:129px;height:20px;overflow:hidden"><div class="t" style="left:0;top:0;font-size:14.5px;font-weight:normal;color:#4a4a4a">Automatische Aufgabe</div></div>
<div class="a" style="left:538px;top:781.8px;width:380px;height:1px;background:#d3d3d3"></div>
<div class="t" style="left:545px;top:791.5px;width:97px;text-align:right;font-size:14.5px;font-weight:normal;color:#4a4a4a">25</div>
<div class="a" style="left:647px;top:791.5px;width:131px;height:20px;overflow:hidden"><div class="t" style="left:0;top:0;font-size:14.5px;font-weight:normal;color:#4a4a4a">Job im Jobplaner ist fehlerhaft</div></div>
<div class="a" style="left:784px;top:791.5px;width:129px;height:20px;overflow:hidden"><div class="t" style="left:0;top:0;font-size:14.5px;font-weight:normal;color:#4a4a4a">Automatische Aufgabe</div></div>
<div class="a" style="left:538px;top:819.2px;width:380px;height:1px;background:#d3d3d3"></div>
<div class="t" style="left:545px;top:828.9px;width:97px;text-align:right;font-size:14.5px;font-weight:normal;color:#4a4a4a">26</div>
<div class="a" style="left:647px;top:828.9px;width:131px;height:20px;overflow:hidden"><div class="t" style="left:0;top:0;font-size:14.5px;font-weight:normal;color:#4a4a4a">Mietvertrag ist noch</div></div>
<div class="a" style="left:784px;top:828.9px;width:129px;height:20px;overflow:hidden"><div class="t" style="left:0;top:0;font-size:14.5px;font-weight:normal;color:#4a4a4a">Automatische Aufgabe</div></div>
<div class="a" style="left:538px;top:856.6px;width:380px;height:1px;background:#d3d3d3"></div>
<div class="t" style="left:545px;top:866.3px;width:97px;text-align:right;font-size:14.5px;font-weight:normal;color:#4a4a4a">27</div>
<div class="a" style="left:647px;top:866.3px;width:131px;height:20px;overflow:hidden"><div class="t" style="left:0;top:0;font-size:14.5px;font-weight:normal;color:#4a4a4a">Objekt leerstehend r</div></div>
<div class="a" style="left:784px;top:866.3px;width:129px;height:20px;overflow:hidden"><div class="t" style="left:0;top:0;font-size:14.5px;font-weight:normal;color:#4a4a4a">Automatische Aufgabe</div></div>
<div class="a" style="left:538px;top:894.0px;width:380px;height:1px;background:#d3d3d3"></div>
<div class="t" style="left:545px;top:903.7px;width:97px;text-align:right;font-size:14.5px;font-weight:normal;color:#4a4a4a">28</div>
<div class="a" style="left:647px;top:903.7px;width:131px;height:20px;overflow:hidden"><div class="t" style="left:0;top:0;font-size:14.5px;font-weight:normal;color:#4a4a4a">Mieter mit Kündigung</div></div>
<div class="a" style="left:784px;top:903.7px;width:129px;height:20px;overflow:hidden"><div class="t" style="left:0;top:0;font-size:14.5px;font-weight:normal;color:#4a4a4a">Automatische Aufgabe</div></div>
<div class="a" style="left:538px;top:931.4px;width:380px;height:1px;background:#d3d3d3"></div>
<div class="t" style="left:545px;top:941.1px;width:97px;text-align:right;font-size:14.5px;font-weight:normal;color:#4a4a4a">29</div>
<div class="a" style="left:647px;top:941.1px;width:131px;height:20px;overflow:hidden"><div class="t" style="left:0;top:0;font-size:14.5px;font-weight:normal;color:#4a4a4a">Frist OR257d abgelaufen</div></div>
<div class="a" style="left:784px;top:941.1px;width:129px;height:20px;overflow:hidden"><div class="t" style="left:0;top:0;font-size:14.5px;font-weight:normal;color:#4a4a4a">Automatische Aufgabe</div></div>
<div class="a" style="left:538px;top:968.8px;width:380px;height:1px;background:#d3d3d3"></div>
<div class="t" style="left:545px;top:978.5px;width:97px;text-align:right;font-size:14.5px;font-weight:normal;color:#4a4a4a">30</div>
<div class="a" style="left:647px;top:978.5px;width:131px;height:20px;overflow:hidden"><div class="t" style="left:0;top:0;font-size:14.5px;font-weight:normal;color:#4a4a4a">Mietzinsanpassung f</div></div>
<div class="a" style="left:784px;top:978.5px;width:129px;height:20px;overflow:hidden"><div class="t" style="left:0;top:0;font-size:14.5px;font-weight:normal;color:#4a4a4a">Automatische Aufgabe</div></div>
<div class="a" style="left:538px;top:1006.2px;width:380px;height:1px;background:#d3d3d3"></div>
<div class="t" style="left:545px;top:1015.9px;width:97px;text-align:right;font-size:14.5px;font-weight:normal;color:#4a4a4a">1100</div>
<div class="a" style="left:647px;top:1015.9px;width:131px;height:20px;overflow:hidden"><div class="t" style="left:0;top:0;font-size:14.5px;font-weight:normal;color:#4a4a4a">Abnahmeprotokoll z</div></div>
<div class="a" style="left:784px;top:1015.9px;width:131px;height:20px;overflow:hidden"><div class="t" style="left:0;top:0;font-size:14.5px;font-weight:normal;color:#4a4a4a">Prozessschritt</div></div>
<div class="a" style="left:538px;top:1043.6px;width:380px;height:1px;background:#d3d3d3"></div>

<div class="t" style="left:537px;top:1277px;font-size:14.3px;color:#555">Erweiterte Ansicht</div>
<div class="a" style="left:540px;top:1299px;width:87px;height:26px;border-radius:11px;background:#a9a9a9"></div>
<div class="a" style="left:548px;top:1307px;width:10px;height:10px;border-radius:50%;background:#fff"></div>

<!-- GRUNDDATEN -->
<div class="a" style="left:973px;top:394px;width:715px;height:274px;background:#f1f1f1"></div>
<div class="t" style="left:986px;top:404px;font-size:18.4px;color:#555">Grunddaten</div>
<div class="t" style="left:1010px;top:472.5px;font-size:14.4px;color:#4a4a4a">Aufgabenvorlage</div>
<div class="a" style="left:1011px;top:495px;width:309px;height:23px;background:#c3c3c3;border:1px solid #bcbcbc"></div>
<div class="t" style="left:1019px;top:497px;font-size:14.4px;color:#555">20</div>
<svg style="left:1299px;top:500px" width="13" height="14"><path d="M9.5 2.5A5 5 0 1 0 11 9" fill="none" stroke="#999" stroke-width="2.2"/><path d="M7 12L12 12.5L10 8" fill="#999"/></svg>
<div class="t" style="left:1340px;top:472.5px;font-size:14.4px;color:#4a4a4a">Aufgabentyp</div>
<div class="a" style="left:1341px;top:495px;width:309px;height:23px;background:#c3c3c3;border:1px solid #bcbcbc"></div>
<div class="t" style="left:1348px;top:497px;font-size:14.4px;color:#444">Automatische Aufgabe</div>
<svg style="left:1606.5px;top:503.5px" width="10" height="6"><path d="M0 0H10L5 5.5Z" fill="#0d84fb"/></svg>

<svg style="left:1628px;top:498px" width="16" height="16"><rect x="0.75" y="0.75" width="14.5" height="14.5" fill="none" stroke="#0d84fb" stroke-width="1.5"/><path d="M4 12L11 5M7 4.5H11.5V9" fill="none" stroke="#111" stroke-width="2.2"/><rect x="1.5" y="9.5" width="4" height="4" fill="none" stroke="#111" stroke-width="1.3"/></svg>

<div class="t" style="left:1010px;top:537px;font-size:14.4px;color:#4a4a4a">Bezeichnung</div>
<div class="a" style="left:1011px;top:560px;width:309px;height:23px;background:#c3c3c3;border:1px solid #bcbcbc"></div>
<div class="t" style="left:1018px;top:562px;font-size:14.4px;color:#444">Erinnerung zu Geburtstag von Eigentümer</div>
<div class="t" style="left:1340px;top:537px;font-size:14.4px;color:#4a4a4a">Aufgabenentität</div>
<div class="a" style="left:1341px;top:560px;width:309px;height:23px;background:#c3c3c3;border:1px solid #bcbcbc"></div>
<div class="t" style="left:1348px;top:562px;font-size:13px;letter-spacing:-0.45px;color:#444">VAAPERSADREIGENTLIEG (VAAPERSADREIG</div>
<svg style="left:1626px;top:560px" width="20" height="20"><g transform="translate(7.5,13)"><circle r="3.6" fill="none" stroke="#bcbcbc" stroke-width="3"/><path d="M0 -6V6M-6 0H6M-4.2 -4.2L4.2 4.2M4.2 -4.2L-4.2 4.2" stroke="#bcbcbc" stroke-width="2"/><circle r="2" fill="#c3c3c3"/></g><g transform="translate(14,6)"><circle r="2.6" fill="none" stroke="#777" stroke-width="1.8"/><path d="M0 -4.5V4.5M-4.5 0H4.5M-3.2 -3.2L3.2 3.2M3.2 -3.2L-3.2 3.2" stroke="#777" stroke-width="1.5"/><circle r="1.2" fill="#c3c3c3"/></g></svg>
<div class="a" style="left:1010px;top:605px;width:20px;height:21px;background:#fff;border:1px solid #a9a9a9"></div>
<div class="t" style="left:1036px;top:605.5px;font-size:14.4px;color:#4a4a4a">Aktiv</div>

<!-- VORLAGEDEFINITION -->
<div class="a" style="left:973px;top:687px;width:715px;height:566px;background:#f1f1f1"></div>
<div class="t" style="left:985.5px;top:697.5px;font-size:19.3px;color:#555">Vorlagedefinition</div>
<div class="t" style="left:1010px;top:765.5px;font-size:14.4px;color:#4a4a4a">Bezeichnung Aufgabe</div>
<div class="a" style="left:1011px;top:788px;width:639px;height:23px;background:#fff;border:1px solid #bdbdbd"></div>
<div class="t" style="left:1019px;top:790.5px;font-size:14.4px;color:#444">Geburtstag von [sortname] ([persnr]) am [gebdatum]</div>
<div class="t" style="left:1010px;top:830px;font-size:14.4px;color:#4a4a4a">Rollen-Nr.</div>
<div class="a" style="left:1011px;top:852.5px;width:309px;height:23px;background:#fff;border:1px solid #bdbdbd"></div>
<div class="t" style="left:1019px;top:854.5px;font-size:14.4px;color:#444">Mandatsleiter</div>
<svg style="left:1276.0px;top:861.0px" width="10" height="6"><path d="M0 0H10L5 5.5Z" fill="#0d84fb"/></svg>

<svg style="left:1298px;top:856px" width="16" height="16"><rect x="0.75" y="0.75" width="14.5" height="14.5" fill="none" stroke="#0d84fb" stroke-width="1.5"/><path d="M4 12L11 5M7 4.5H11.5V9" fill="none" stroke="#111" stroke-width="2.2"/><rect x="1.5" y="9.5" width="4" height="4" fill="none" stroke="#111" stroke-width="1.3"/></svg>

<div class="t" style="left:1340px;top:830px;font-size:14.4px;color:#4a4a4a">Verantwortlich</div>
<div class="a" style="left:1341px;top:852.5px;width:309px;height:23px;background:#fff;border:1px solid #bdbdbd"></div>
<svg style="left:1606.5px;top:861.0px" width="10" height="6"><path d="M0 0H10L5 5.5Z" fill="#0d84fb"/></svg>

<svg style="left:1628px;top:856px" width="16" height="16"><rect x="0.75" y="0.75" width="14.5" height="14.5" fill="none" stroke="#0d84fb" stroke-width="1.5"/><path d="M4 12L11 5M7 4.5H11.5V9" fill="none" stroke="#111" stroke-width="2.2"/><rect x="1.5" y="9.5" width="4" height="4" fill="none" stroke="#111" stroke-width="1.3"/></svg>

<div class="t" style="left:1010px;top:895px;font-size:14.4px;color:#4a4a4a">Priorität</div>
<div class="a" style="left:1011px;top:917.5px;width:309px;height:23px;background:#fff;border:1px solid #bdbdbd"></div>
<div class="t" style="left:1019px;top:919.5px;font-size:14.4px;color:#444">Mittel</div>
<svg style="left:1301.0px;top:926.0px" width="10" height="6"><path d="M0 0H10L5 5.5Z" fill="#0d84fb"/></svg>

<div class="t" style="left:1010px;top:959.5px;font-size:14.4px;color:#4a4a4a">Dauer Fälligkeit</div>
<div class="a" style="left:1011px;top:982.5px;width:128px;height:23px;background:#fff;border:1px solid #bdbdbd"></div>
<div class="t" style="left:1019px;top:984.5px;font-size:14.4px;color:#444">0</div>
<div class="t" style="left:1159px;top:959.5px;font-size:14.4px;color:#4a4a4a">Zeiteinheit</div>
<div class="a" style="left:1160px;top:982.5px;width:160px;height:23px;background:#fff;border:1px solid #bdbdbd"></div>
<div class="t" style="left:1167px;top:984.5px;font-size:14.4px;color:#444">Tag(e)</div>
<svg style="left:1301.0px;top:991.0px" width="10" height="6"><path d="M0 0H10L5 5.5Z" fill="#0d84fb"/></svg>

<div class="t" style="left:1010px;top:1025px;font-size:14.4px;color:#4a4a4a">Aufgabentext</div>
<div class="a" style="left:1011px;top:1047px;width:639px;height:164px;background:#fff;border:1px solid #bdbdbd"></div>
<div class="a" style="left:1020px;top:1050.5px;font-size:14.4px;line-height:16.3px;color:#444;white-space:pre;-webkit-text-stroke:0.25px currentColor">Aufgabenvorlage: [aufgabedefnr]

Der zuständige Mandatsleiter wird ein Monat vor dem Geburtstag eines Eigentümers
(Liegenschaftseigentümer) erinnert, eine Geburtstagskarte/geschenk zu organisieren.

Geburtstag von [anrede] [sortname] am [gebdatum]
Runder-Geburtstag: [rundergebtag]
Personen-Nr:  [persnr]
Liegenschaft: [liegnr], [liegstr]</div>
</body></html>
